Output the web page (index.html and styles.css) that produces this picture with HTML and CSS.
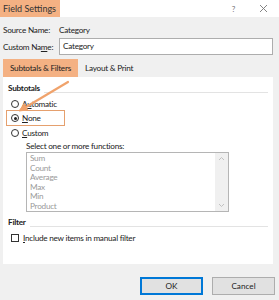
FILE: index.html
```html
<!DOCTYPE html>
<html lang="en">
<head>
    <meta charset="UTF-8">
    <title>Field Settings</title>
    <link rel="stylesheet" href="styles.css">
</head>
<body>

<div class="dialog">
    <div class="titlebar">
        <span class="title">Field Settings</span>
        <span class="title-btns">
            <span class="help">?</span>
            <svg class="close" width="9" height="9" viewBox="0 0 9 9"><path d="M1 1L8 8M8 1L1 8" stroke="#777" stroke-width="0.9"/></svg>
        </span>
    </div>

    <div class="top">
        <div class="row">
            <span class="lbl">Source Name:</span>
            <span>Category</span>
        </div>
        <div class="row">
            <span class="lbl">Custom Na<u>m</u>e:</span>
            <div class="textbox">Category</div>
        </div>
    </div>

    <div class="tabs">
        <div class="tab active">Subtotals &amp; Filters</div>
        <div class="tab">Layout &amp; Print</div>
    </div>

    <div class="panel">
        <div class="group-head">
            <span>Subtotals</span>
            <span class="rule"></span>
        </div>
        <label class="opt"><span class="radio"></span><span>A<u>u</u>tomatic</span></label>
        <label class="opt picked"><span class="radio on"></span><span><u>N</u>one</span></label>
        <label class="opt"><span class="radio"></span><span><u>C</u>ustom</span></label>

        <div class="funcs">
            <div class="hint">Select one or more functions:</div>
            <div class="listbox">
                <ul>
                    <li>Sum</li>
                    <li>Count</li>
                    <li>Average</li>
                    <li>Max</li>
                    <li>Min</li>
                    <li>Product</li>
                </ul>
                <div class="scroll">
                    <svg width="7" height="5" viewBox="0 0 7 5"><path d="M1 4L3.5 1.5L6 4" fill="none" stroke="#bbb" stroke-width="0.9"/></svg>
                    <svg width="7" height="5" viewBox="0 0 7 5"><path d="M1 1L3.5 3.5L6 1" fill="none" stroke="#bbb" stroke-width="0.9"/></svg>
                </div>
            </div>
        </div>

        <div class="group-head filter-head">
            <span>Filter</span>
            <span class="rule"></span>
        </div>
        <label class="opt check-row"><span class="check"></span><span><u>I</u>nclude new items in manual filter</span></label>

        <svg class="arrow" width="80" height="40" viewBox="0 0 80 40">
            <path d="M65 2L23 27" stroke="#f0a36c" stroke-width="2.2" stroke-linecap="round"/>
            <path d="M16 31L24.7 29.9L21.1 23.9Z" fill="#f0a36c" stroke="#f0a36c" stroke-width="1" stroke-linejoin="round"/>
        </svg>
    </div>

    <div class="footer">
        <button class="btn ok">OK</button>
        <button class="btn">Cancel</button>
    </div>
</div>

</body>
</html>
```

FILE: styles.css
```css
body {
    margin: 0;
    font-family: Lato, "Open Sans", sans-serif;
    font-size: 8.2px;
    letter-spacing: -0.25px;
    color: #222;
}
.dialog {
    width: 279px;
    height: 300px;
    background: #f0f0f0;
    display: flex;
    flex-direction: column;
    position: relative;
}
.titlebar {
    height: 17px;
    background: #fff;
    display: flex;
    justify-content: space-between;
    align-items: center;
}
.title {
    background: #f4b183;
    height: 17px;
    width: 57px;
    padding-left: 3px;
    line-height: 17px;
    font-size: 9px;
    letter-spacing: 0;
    color: #333;
}
.title-btns {
    display: flex;
    align-items: center;
    gap: 24px;
    padding-right: 11px;
}
.help {
    color: #777;
    font-size: 8px;
}
.top {
    padding: 4px 6px 0 3px;
}
.row {
    display: flex;
    align-items: center;
    height: 17px;
}
.lbl {
    width: 56px;
}
.textbox {
    flex: 1;
    height: 15px;
    line-height: 15px;
    background: #fff;
    border: 1px solid #adadad;
    padding-left: 3px;
}
.tabs {
    display: flex;
    margin: 4px 0 0 3px;
    height: 18px;
    white-space: nowrap;
}
.tab {
    padding: 0 7px;
    line-height: 18px;
}
.tab.active {
    background: #f4b183;
    padding: 0 6px 0 7px;
    width: 62px;
}
.panel {
    position: relative;
    margin: 0 6px 0 3px;
    height: 187px;
    background: #fff;
    padding: 5px 5px 0 5px;
    box-sizing: border-box;
}
.group-head {
    display: flex;
    align-items: flex-end;
    gap: 4px;
    font-weight: bold;
    height: 11px;
    line-height: 10px;
}
.group-head .rule {
    flex: 1;
    border-bottom: 1px solid #e3e3e3;
}
.opt {
    display: flex;
    align-items: center;
    gap: 3px;
    height: 13px;
    margin-left: 3px;
}
.group-head + .opt {
    margin-top: 4px;
}
.opt.picked {
    box-sizing: border-box;
    margin-left: -2px;
    padding-left: 4px;
    width: 59px;
    height: 16px;
    border: 1.5px solid #e5a06e;
}
.radio {
    width: 8px;
    height: 8px;
    border: 1px solid #333;
    border-radius: 50%;
    box-sizing: border-box;
    background: #fff;
    position: relative;
}
.radio.on::after {
    content: "";
    position: absolute;
    left: 1.5px;
    top: 1.5px;
    width: 3px;
    height: 3px;
    border-radius: 50%;
    background: #222;
}
.funcs {
    margin: 2px 0 0 18px;
}
.hint {
    height: 11px;
}
.listbox {
    display: flex;
    width: 203px;
    height: 60px;
    border: 1px solid #b5b5b5;
    box-sizing: border-box;
    background: #fff;
}
.listbox ul {
    flex: 1;
    margin: 0;
    padding: 1px 0 0 3px;
    list-style: none;
    color: #9a9a9a;
}
.listbox li {
    height: 9.6px;
    line-height: 9.6px;
}
.scroll {
    width: 13px;
    background: #f0f0f0;
    display: flex;
    flex-direction: column;
    justify-content: space-between;
    align-items: center;
    padding: 3px 0;
}
.filter-head {
    margin-top: 4px;
}
.check-row {
    margin-top: 3px;
}
.check {
    width: 8px;
    height: 8px;
    border: 1px solid #333;
    box-sizing: border-box;
    background: #fff;
    margin-right: 1px;
}
.arrow {
    position: absolute;
    left: 0;
    top: 3px;
}
.footer {
    display: flex;
    justify-content: flex-end;
    gap: 9px;
    padding: 13px 4px 0 0;
}
.btn {
    width: 63px;
    height: 18px;
    font: inherit;
    color: #222;
    background: #e1e1e1;
    border: 1px solid #adadad;
}
.btn.ok {
    border: 1px solid #0078d7;
    box-shadow: inset 0 0 0 1px #0078d7;
}
```
